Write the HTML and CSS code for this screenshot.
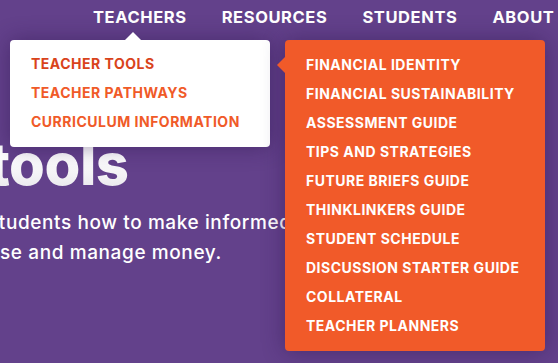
FILE: index.html
```html
<!DOCTYPE html>
<html>
<head>
<meta charset="utf-8">
<link rel="stylesheet" href="styles.css">
</head>
<body>
<div class="page">
  <nav class="nav">
    <a class="nav-item">TEACHERS</a>
    <a class="nav-item">RESOURCES</a>
    <a class="nav-item">STUDENTS</a>
    <a class="nav-item">ABOUT</a>
  </nav>
  <section class="hero">
    <h1 class="hero-title">tools</h1>
    <p class="hero-text">students how to make informed decisions about<br>use and manage money.</p>
  </section>

  <div class="menu menu-white">
    <a class="menu-item active">TEACHER TOOLS</a>
    <a class="menu-item">TEACHER PATHWAYS</a>
    <a class="menu-item">CURRICULUM INFORMATION</a>
  </div>

  <div class="menu menu-orange">
    <a class="menu-item">FINANCIAL IDENTITY</a>
    <a class="menu-item">FINANCIAL SUSTAINABILITY</a>
    <a class="menu-item">ASSESSMENT GUIDE</a>
    <a class="menu-item">TIPS AND STRATEGIES</a>
    <a class="menu-item">FUTURE BRIEFS GUIDE</a>
    <a class="menu-item">THINKLINKERS GUIDE</a>
    <a class="menu-item">STUDENT SCHEDULE</a>
    <a class="menu-item">DISCUSSION STARTER GUIDE</a>
    <a class="menu-item">COLLATERAL</a>
    <a class="menu-item">TEACHER PLANNERS</a>
  </div>
</div>
</body>
</html>
```
FILE: styles.css
```css
* { box-sizing: border-box; }
html, body {
  margin: 0;
  padding: 0;
}
body {
  background: #63418b;
  font-family: Inter, "Liberation Sans", sans-serif;
  overflow: hidden;
}
.page {
  position: relative;
  width: 558px;
  height: 363px;
  overflow: hidden;
}
.nav {
  display: flex;
  gap: 35px;
  padding: 7px 0 0 93px;
  height: 40px;
  white-space: nowrap;
}
.nav-item {
  color: #fff;
  font-weight: 700;
  font-size: 16.5px;
  line-height: 20px;
  letter-spacing: 0.6px;
}
.hero {
  margin-left: -12px;
  padding-top: 94px;
  color: #fff;
}
.hero-title {
  margin: 0;
  font-size: 58px;
  font-weight: 800;
  line-height: 60px;
  letter-spacing: -0.5px;
  background: linear-gradient(#ffffff 40%, #e6e4ea);
  -webkit-background-clip: text;
  background-clip: text;
  color: transparent;
}
.hero-text {
  margin: 14px 0 0 0;
  font-size: 19px;
  font-weight: 500;
  line-height: 30px;
  white-space: nowrap;
  letter-spacing: 0.6px;
}
.menu {
  position: absolute;
  top: 40px;
  width: 260px;
  border-radius: 4px;
  display: flex;
  flex-direction: column;
  padding: 9px 0 10px 21px;
  box-shadow: 0 0 22px rgba(40, 15, 70, 0.45);
}
.menu::before {
  content: "";
  position: absolute;
  width: 0;
  height: 0;
}
.menu-item {
  display: block;
  font-weight: 700;
  font-size: 14px;
  line-height: 29px;
  letter-spacing: 0.5px;
  white-space: nowrap;
}
.menu-white {
  left: 10px;
  height: 107px;
  background: #fff;
}
.menu-white::before {
  top: -8px;
  left: 115px;
  border-left: 8px solid transparent;
  border-right: 8px solid transparent;
  border-bottom: 8px solid #fff;
}
.menu-white .menu-item { color: #f05a28; }
.menu-white .menu-item.active { color: #d9431b; }
.menu-orange {
  left: 285px;
  height: 311px;
  padding-top: 10px;
  background: #f15a29;
}
.menu-orange::before {
  left: -8px;
  top: 17px;
  border-top: 8px solid transparent;
  border-bottom: 8px solid transparent;
  border-right: 8px solid #f15a29;
}
.menu-orange .menu-item { color: #fff; }
```
